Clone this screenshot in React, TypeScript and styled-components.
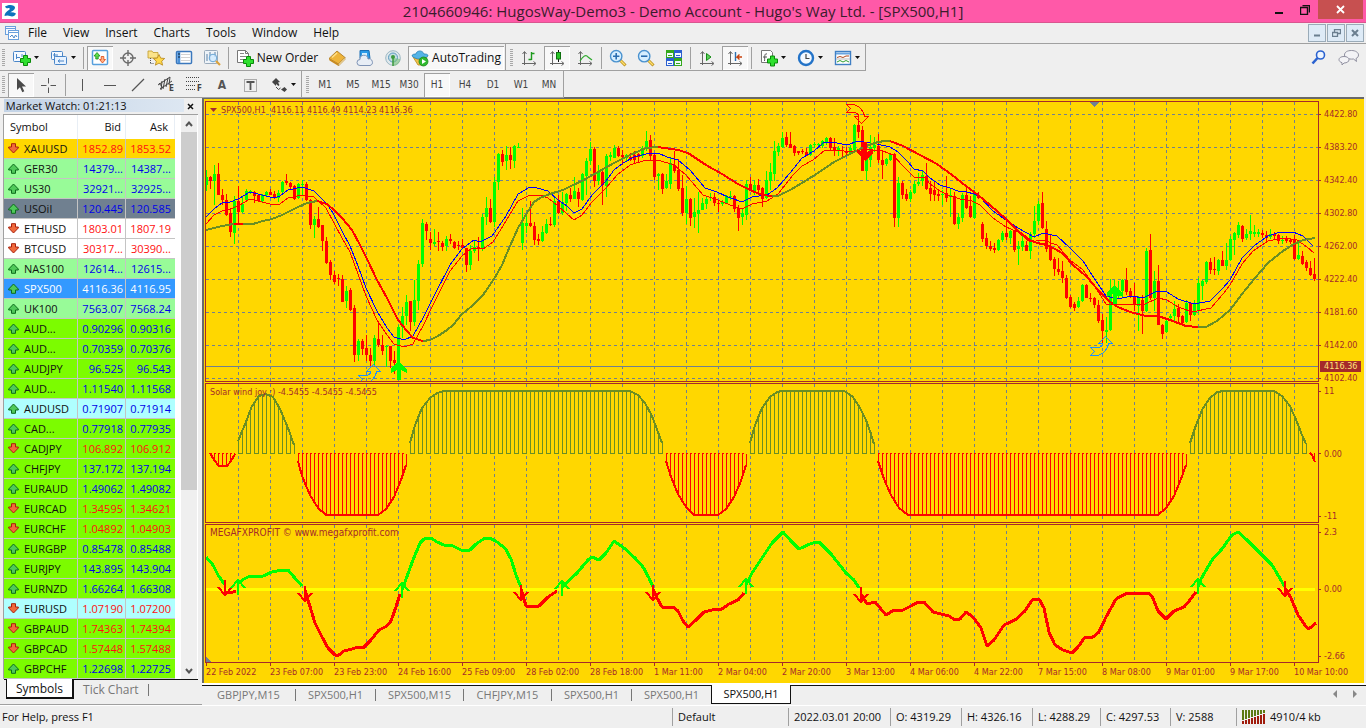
import React from 'react';
import styled, { createGlobalStyle, css } from 'styled-components';

/* ---------- theme values ---------- */

const face = '#efefef';
const line = '#a0a0a0';
const gold = '#ffd700';
const brown = '#a52a2a';
const slate = '#708090';
const olive = '#6b8e23';
const lime = '#00ff00';
const uiFont = '"Open Sans", "Noto Sans", sans-serif';
const chartFont = '"DejaVu Sans Condensed", "DejaVu Sans", sans-serif';

const Global = createGlobalStyle`
  * { box-sizing: border-box; }
  body { margin: 0; background: ${face}; font: 11px/16px ${uiFont}; color: #111; }
  button { font: inherit; color: inherit; border: 0; background: none; padding: 0; margin: 0; }
  svg { display: block; }
`;

/* ---------- price data ---------- */

/* One entry per bar: direction, high, body top, body bottom, low (thirds of a pixel from the frame). */
const BARS = `
g215,237,262,278 r233,237,250,273 g200,228,250,320 r195,228,290,292 r272,290,305,320 r287,305,350,353
r330,345,402,417 g293,308,405,437 r265,310,342,378 g295,318,342,345 g272,280,305,308 g277,279,285,288
r278,282,295,315 r287,292,308,313 g288,290,310,312 g280,281,292,295 r273,283,290,292 r280,289,300,302
g277,285,300,312 g250,252,282,285 r228,249,256,260 r252,254,266,275 r260,263,303,305 g255,258,300,303
g246,258,262,292 r252,257,305,308 r303,306,381,392 g353,363,381,420 r327,362,387,390 r380,382,430,458
r417,430,494,497 r487,492,530,547 r518,530,552,557 r527,539,543,563 r532,543,611,613 g565,578,608,630
r570,575,635,638 r622,630,770,792 g722,730,772,790 r722,730,752,772 r712,750,772,790 r750,770,790,805
g712,720,788,800 r675,723,742,747 r712,742,758,770 g740,745,748,808 r743,745,790,810 r758,787,795,828
g682,688,800,845 g628,653,688,720 g592,611,655,680 r608,610,672,698 g547,605,672,685 g487,498,608,635
g363,375,498,508 r372,377,400,425 r403,422,436,455 g393,431,437,443 r402,430,433,458 r430,435,448,460
g415,422,445,460 r408,422,430,437 r428,432,450,453 r428,440,443,455 r422,440,450,452 r450,451,500,522
g440,460,500,515 g430,447,460,466 r417,447,453,490 g347,357,452,460 g297,330,358,380 r303,330,371,375
g238,252,371,388 g165,168,253,275 r155,168,191,203 g143,172,190,215 r147,170,185,212 g141,144,188,210
g135,147,149,150 g330,375,435,455 g343,375,383,405 r310,375,385,388 r372,384,425,440 r408,424,430,440
g385,403,430,432 g363,378,405,407 r357,377,380,385 g300,310,381,388 r292,308,345,348 g283,312,345,350
g285,287,315,340 r270,290,303,312 g237,280,303,303 r270,283,303,328 g225,228,305,310 g180,190,235,290
g133,153,188,200 r147,153,248,268 g200,222,250,262 r210,222,262,320 g168,175,265,297 g163,172,177,190
g142,150,180,180 r145,150,173,178 r155,170,178,200 g168,172,180,190 r165,178,185,190 r160,172,185,195
r165,168,178,195 g145,150,175,180 g98,130,150,160 r110,127,173,185 r165,171,237,245 g225,228,235,275
r225,228,272,287 g227,250,270,273 g180,195,258,273 r158,200,218,225 r183,215,272,280 r232,270,345,355
g265,302,345,378 r300,302,360,383 g300,342,357,390 g283,336,348,405 g300,315,335,335 g297,302,318,333
g285,296,300,310 r285,297,316,323 r305,315,318,342 g305,312,318,325 g290,295,315,318 g280,293,297,305
r290,293,333,342 r320,330,360,398 g330,345,357,380 g245,258,352,365 r238,258,278,280 g245,262,278,290
r243,262,275,285 r268,270,303,327 g220,247,300,303 g195,222,250,275 g130,160,228,248 g135,143,162,175
g103,120,147,150 r102,117,140,147 r102,138,150,150 r142,144,165,175 r158,160,165,170 r153,159,162,168
r150,163,173,175 g138,140,172,173 g132,138,142,150 g135,138,142,147 g125,130,145,150 g118,120,135,140
r118,120,150,155 r120,148,158,173 g145,150,157,175 r145,157,160,177 r147,158,165,175 g140,150,165,168
g78,80,155,165 r55,80,102,120 r83,95,218,220 g150,178,218,245 g112,148,185,207 g118,142,150,163
r108,143,185,195 r160,186,200,243 g180,183,198,205 g165,168,185,190 r165,168,360,387 g237,255,360,387
r248,255,290,302 r272,287,302,308 g275,283,303,312 g250,257,285,287 g225,252,258,263 g220,230,248,263
r195,233,272,275 r248,270,288,308 r248,277,292,310 r280,289,293,308 g275,287,290,322 r233,286,300,312
g273,290,298,357 r282,295,378,382 g345,358,378,393 g285,290,360,372 r262,290,330,333 r295,323,357,360
g275,287,360,362 r283,290,300,302 r372,378,423,433 r405,420,443,452 r430,443,453,460 r435,450,455,465
g422,426,455,458 g400,405,427,432 r367,405,417,425 g395,398,420,437 r395,398,455,463 g430,445,453,500
g412,430,448,460 r430,440,458,460 g403,408,460,482 g325,368,408,420 g308,318,370,380 r282,315,390,392
r370,393,452,463 r410,445,487,490 r477,483,512,535 r480,512,523,532 r490,519,540,555 r530,540,600,603
r590,598,627,630 r612,618,630,640 g598,608,628,630 g558,562,610,613 r558,560,600,600 r585,600,604,613
r598,600,620,630 r605,620,670,675 r648,665,700,740 g658,696,702,735 g543,590,695,700 g545,585,600,610
g550,575,595,600 g543,547,580,600 r510,545,582,590 r570,578,593,600 r555,593,622,640 g595,600,625,700
r590,605,640,708 g450,460,640,643 r408,457,600,605 g520,550,600,640 r500,550,680,682 r678,680,707,722
g660,668,703,705 g648,653,660,670 g610,632,655,668 r618,630,657,675 r650,655,675,680 g605,615,673,675
r613,616,652,668 g605,618,650,655 g540,555,640,645 g545,550,563,605 g488,492,552,557 r480,493,517,527
r477,513,517,532 g483,486,520,530 r460,486,503,505 g435,485,503,515 g415,423,487,490 g402,405,425,470
g372,382,410,420 r380,383,423,433 g393,408,420,425 g352,400,408,425 g382,402,408,417 g393,403,407,418
r397,405,412,420 r400,410,420,428 g393,408,418,422 r402,408,413,425 r407,412,430,437 g415,425,430,437
r413,422,428,435 r420,425,432,437 r410,425,482,485 g430,470,483,487 r458,475,498,500 r485,492,510,520
r488,510,530,535 r480,528,543,548`
  .trim()
  .split(/\s+/)
  .map((t) => ({ up: t[0] === 'g', v: t.slice(1).split(',').map((n) => Math.round(Number(n) / 3) - 4) }));

const SLOW: [string, string][] = [
  [olive, '0,128 12,125 21,123 28,122'],
  ['red', '28,122 37,122'],
  [olive, '37,122 47,122 57,119 66,117 76,113 84,109 92,105 101,101 111,99'],
  ['red', '111,99 121,102 128,108 136,116 146,128 154,143 162,159 171,178 181,196 192,218 201,229 207,236 217,239'],
  [olive, '217,239 224,238 232,234 241,228 247,223 256,212 266,204 277,193 288,177 296,163 304,144 312,126 321,111 328,100 334,96 341,93 347,91 357,88 367,83 376,79 392,70 408,61 424,53 440,46 452,45'],
  ['red', '452,45 472,48 482,51 500,63 516,72 532,82 544,88 556,93 566,94'],
  [olive, '566,94 572,94 584,88 596,81 612,71 628,60 644,52 660,44 672,40 679,39 684,39'],
  ['red', '684,39 697,44 714,53 731,62 746,73 760,84 772,93 784,103 800,117 812,129 824,138 831,141 841,143 849,147 856,151 867,163 881,175 892,188 904,200 912,205 924,210 940,214 952,214 964,218 980,224 992,225'],
  [olive, '992,225 1000,225 1011,219 1024,208 1036,192 1049,176 1062,161 1077,149 1088,142 1097,138 1109,136'],
];

const FAST_BLUE =
  '0,115 8,107 16,101 24,100 32,97 44,90 56,93 68,96 74,94 82,88 96,85 108,89 120,101 127,111 136,129 144,144 152,164 160,186 171,209 181,226 188,235 198,238 207,234 217,216 227,196 244,163 256,147 268,138 274,140 286,134 300,114 312,92 324,85 331,86 342,89 352,98 361,104 368,111 376,107 386,93 400,79 408,68 417,61 428,55 440,52 452,51 461,55 472,58 484,68 499,86 511,90 522,95 536,100 546,95 561,93 571,86 584,71 596,56 608,49 617,41 626,40 641,43 652,39 664,41 671,42 684,45 692,50 701,59 708,67 717,69 724,76 734,83 744,86 752,89 761,90 768,92 774,95 787,109 800,118 812,126 828,135 837,131 851,134 864,146 877,159 888,176 900,194 911,197 926,194 937,196 951,189 961,190 972,197 988,202 1004,199 1017,186 1024,178 1036,156 1049,143 1062,134 1074,130 1087,130 1097,134 1107,144';

const FAST_RED =
  '0,122 8,113 16,109 24,107 32,104 44,97 56,100 68,103 74,102 82,96 96,93 108,95 120,106 128,121 136,136 144,150 152,172 160,194 171,218 181,233 188,242 198,245 207,242 217,224 227,203 244,169 256,154 266,146 277,147 287,140 300,119 312,99 324,93 334,93 342,96 352,104 361,112 368,118 376,113 386,100 400,86 411,73 424,63 440,58 452,58 468,63 480,73 497,93 512,98 524,103 536,107 546,102 561,99 572,92 587,73 596,64 607,58 619,48 631,48 644,50 657,47 677,49 687,53 697,64 708,75 719,76 724,82 734,89 744,94 754,97 766,99 774,103 787,116 800,125 812,130 824,140 837,138 851,143 864,158 877,168 888,183 900,202 911,203 926,202 937,203 952,196 961,198 972,205 986,210 1005,206 1017,192 1024,183 1036,162 1047,149 1062,139 1077,136 1091,138 1101,145 1108,151';

type Pt = [number, number];
const WIND: { color: string; pts: Pt[] }[] = [
  { color: 'red', pts: [[4, 69], [8, 76], [13, 82], [21, 82], [25, 77], [29, 70]] },
  { color: olive, pts: [[32, 57], [40, 38], [46, 22], [53, 12], [60, 10], [67, 13], [74, 25], [82, 44], [88, 61]] },
  { color: 'red', pts: [[92, 77], [96, 92], [104, 111], [112, 124], [120, 131], [172, 131], [180, 125], [188, 113], [195, 96], [200, 81]] },
  { color: olive, pts: [[204, 59], [209, 41], [216, 24], [224, 14], [231, 9], [238, 7], [424, 7], [432, 11], [439, 19], [446, 32], [452, 48], [456, 59]] },
  { color: 'red', pts: [[460, 77], [465, 93], [472, 110], [480, 123], [488, 131], [512, 131], [520, 125], [528, 113], [535, 97], [540, 81]] },
  { color: olive, pts: [[544, 59], [549, 41], [556, 24], [564, 13], [571, 8], [576, 7], [638, 7], [646, 12], [653, 22], [660, 36], [665, 50], [668, 60]] },
  { color: 'red', pts: [[672, 77], [678, 95], [685, 111], [693, 124], [702, 131], [952, 131], [960, 124], [968, 112], [975, 95], [980, 81]] },
  { color: olive, pts: [[984, 59], [990, 41], [997, 24], [1004, 14], [1011, 8], [1018, 7], [1068, 7], [1076, 12], [1084, 22], [1091, 38], [1096, 51], [1100, 60]] },
  { color: 'red', pts: [[1104, 69], [1106, 71], [1109, 78]] },
];

const OSC: [string, string][] = [
  [lime, '0,32 7,40 12,50 19,60'],
  ['red', '20,67 24,68 30,66'],
  [lime, '33,58 38,54 44,51 50,51 55,52 66,47 76,45 82,45 88,52 96,61'],
  ['red', '99,65 102,75 109,98 116,112 122,123 129,130 133,130 138,126 146,124 152,122 157,123 164,116 173,105 181,101 185,96 190,82 194,69'],
  [lime, '196,65 199,57 207,35 214,18 218,14 225,13 231,17 238,20 247,21 255,25 264,25 270,19 279,13 284,13 291,17 299,23 305,34 310,50 315,62'],
  ['red', '315,64 320,81 333,81 342,72 351,66'],
  [lime, '356,62 371,48 382,35 386,32 393,35 400,28 408,16 418,23 429,33 437,42 443,53 447,62'],
  ['red', '447,64 451,73 456,82 467,82 472,86 477,96 482,102 490,95 498,87 506,85 516,84 523,79 532,75 538,68'],
  [lime, '540,60 546,48 556,33 566,18 577,7 585,16 593,24 604,19 610,17 613,17 625,29 640,48 648,55 653,63'],
  ['red', '655,69 661,79 669,77 680,90 688,85 695,86 705,81 712,77 718,77 727,87 743,91 749,95 754,94 760,87 767,92 775,103 781,121 788,115 798,100 809,95 819,86 826,75 833,74 838,83 843,107 849,120 857,125 866,128 872,122 879,112 887,112 893,107 900,92 910,74 921,68 942,68 946,71 952,86 960,94 968,86 978,82 984,75 990,67'],
  [lime, '992,62 995,54 1006,35 1016,24 1026,10 1032,7 1041,15 1056,30 1066,40 1079,62'],
  ['red', '1079,63 1085,73 1092,90 1101,103 1104,103 1110,98'],
];

const OSC_ARROWS: [number, number, boolean][] = [
  [19, 71, false], [32, 54, true], [99, 77, false], [196, 57, true], [315, 76, false], [356, 55, true],
  [447, 76, false], [540, 53, true], [655, 78, false], [992, 53, true], [1079, 72, false],
];

/* ---------- chart drawing ---------- */

const PLOT_W = 1112;

const Drawing = styled.svg`
  display: block;
  width: 100%;
  height: 100%;
`;

const Plot = ({ h, children }: { h: number; children: React.ReactNode }) => (
  <Drawing viewBox={`0 0 ${PLOT_W} ${h}`} preserveAspectRatio="none" shapeRendering="crispEdges" aria-hidden="true">
    {Array.from({ length: 34 }, (_, i) => (
      <line key={i} x1={32 * i + 32.5} x2={32 * i + 32.5} y1="0" y2={h} stroke={slate} strokeDasharray="3 3" />
    ))}
    {children}
  </Drawing>
);

const CURVED = 'M0 0l7 7h-4c-1 7-7 12-12 12h-6l4-4-4-4h6c3 0 6-1 6-4h-4z';
const SOLID = 'M0 0l8 8v4l-6-3v10h-4v-10l-6 3v-4z';

const PricePlot = () => (
  <Plot h={279}>
    {Array.from({ length: 9 }, (_, i) => (
      <line key={i} x1="0" x2={PLOT_W} y1={12.5 + 33 * i} y2={12.5 + 33 * i} stroke={slate} strokeDasharray="3 3" />
    ))}
    <line x1="0" x2={PLOT_W} y1="264.5" y2="264.5" stroke={slate} />
    <path d="M884 0h9l-4.5 5z" fill={slate} />
    {BARS.map(({ up, v }, k) => (
      <g key={k} fill={up ? lime : 'red'}>
        <rect x={4 * k} y={v[0]} width="1" height={Math.max(1, v[3] - v[0])} />
        <rect x={4 * k - 1} y={v[1]} width="3" height={Math.max(1, v[2] - v[1])} />
      </g>
    ))}
    <polyline points={FAST_RED} fill="none" stroke="red" />
    <polyline points={FAST_BLUE} fill="none" stroke="blue" />
    {SLOW.map(([c, p], i) => (
      <polyline key={i} points={p} fill="none" stroke={c} strokeWidth="2" />
    ))}
    <path d={SOLID} fill={lime} transform="translate(192.5 259)" />
    <path d={SOLID} fill={lime} transform="translate(908.5 183)" />
    <path d={SOLID} fill="red" transform="translate(659 59) scale(1 -1)" />
    <path d={CURVED} fill="none" stroke="#1e90ff" transform="translate(167.5 262.5)" />
    <path d={CURVED} fill="none" stroke="#1e90ff" transform="translate(899.5 234.5)" />
    <path d={CURVED} fill="none" stroke="red" transform="translate(655.5 21.5) scale(1 -1)" />
  </Plot>
);

const levelAt = (pts: Pt[], x: number) => {
  for (let i = 1; i < pts.length; i++) {
    const [x0, y0] = pts[i - 1];
    const [x1, y1] = pts[i];
    if (x <= x1) return y0 + ((y1 - y0) * (x - x0)) / (x1 - x0);
  }
  return pts[pts.length - 1][1];
};

const WindPlot = () => (
  <Plot h={138}>
    {WIND.map(({ color, pts }, i) => {
      const first = pts[0][0];
      const last = pts[pts.length - 1][0];
      const xs: number[] = [];
      for (let x = Math.ceil(first / 4) * 4; x <= last; x += 4) xs.push(x);
      return (
        <g key={i} stroke={color} fill="none">
          <path d={xs.map((x) => `M${x + 0.5} 69.5V${Math.round(levelAt(pts, x))}`).join('')} />
          <line x1={first} x2={last} y1="69.5" y2="69.5" strokeDasharray={color === 'red' ? '2 2' : '4 4'} />
          <polyline points={pts.map((p) => p.join()).join(' ')} strokeWidth="2" />
        </g>
      );
    })}
  </Plot>
);

const OscPlot = () => (
  <Plot h={137}>
    <rect x="0" y="63" width="1109" height="3" fill="#ffff00" />
    {OSC.map(([c, p], i) => (
      <polyline key={i} points={p} fill="none" stroke={c} strokeWidth="3" strokeLinejoin="round" />
    ))}
    {OSC_ARROWS.map(([x, y, up], i) => (
      <path
        key={i}
        d={up ? 'M0 1v15M-7 9L0 1L7 9' : 'M0-1v-15M-7-9L0-1L7-9'}
        transform={`translate(${x} ${y})`}
        fill="none"
        stroke={up ? lime : 'red'}
        strokeWidth="2"
      />
    ))}
    <path d="M0 132v5h5z" fill={slate} />
  </Plot>
);

/* ---------- window frame ---------- */

const Window = styled.div`
  display: flex;
  flex-direction: column;
  min-height: 100vh;
  min-width: 1024px;
  background: ${face};
  overflow: hidden;
`;

const TitleBar = styled.header`
  display: grid;
  grid-template-columns: 1fr auto 1fr;
  height: 23px;
  background: #ff59a8;
  border-bottom: 1px solid #d9568f;
`;

const Title = styled.h1`
  margin: 0;
  font-size: 15px;
  line-height: 22px;
  font-weight: 400;
  color: #3b1c2c;
`;

const Logo = styled.svg`
  margin: 3px 2px;
  background: #fff;
`;

const Caption = styled.div`
  display: flex;
  justify-content: flex-end;
  padding-right: 3px;
`;

const CaptionButton = styled.button<{ $close?: boolean }>`
  display: flex;
  align-items: center;
  justify-content: center;
  width: ${(p) => (p.$close ? 45 : 26)}px;
  height: 19px;
  background: ${(p) => (p.$close ? '#c75050' : 'transparent')};
`;

const MenuBar = styled.nav`
  display: flex;
  align-items: center;
  height: 21px;
  padding: 0 2px 0 5px;
  border-bottom: 1px solid ${line};
`;

const MenuItem = styled.button`
  padding: 0 8px;
  font-size: 12px;
  line-height: 18px;
`;

const Mdi = styled.div`
  display: flex;
  gap: 1px;
  margin-left: auto;
`;

const MdiButton = styled.button`
  display: flex;
  align-items: center;
  justify-content: center;
  width: 18px;
  height: 18px;
  border: 1px solid #9aabb8;
  background: #deebf7;
`;

const ToolRow = styled.div`
  display: flex;
  align-items: stretch;
  height: 27px;
`;

const ToolGroup = styled.div`
  display: flex;
  align-items: center;
  padding: 1px 0 0 7px;
  border-right: 1px solid ${line};
  border-bottom: 1px solid ${line};
  position: relative;
  & + & { padding-left: 9px; }
  &::before {
    content: '';
    position: absolute;
    left: 2px;
    top: 5px;
    bottom: 4px;
    width: 3px;
    background: repeating-linear-gradient(#a8a8a8 0 1px, transparent 1px 2px);
  }
  & + &::before { left: 4px; }
`;

const pressed = css`
  background: #f8f8f8;
  box-shadow: inset 1px 1px ${line}, inset -1px -1px #fff;
`;

const ToolButton = styled.button<{ $on?: boolean; $w?: number }>`
  display: flex;
  align-items: center;
  justify-content: center;
  gap: 3px;
  width: ${(p) => p.$w ?? 26}px;
  height: 24px;
  margin: 0 1px;
  font-size: 12px;
  white-space: nowrap;
  ${(p) => p.$on && pressed}
`;

const PeriodButton = styled(ToolButton)`
  font: 10px/24px ${chartFont};
  color: #444;
`;

const Divider = styled.span`
  width: 1px;
  height: 22px;
  margin: 0 2px;
  background: ${line};
`;

const Corner = styled.div`
  display: flex;
  align-items: center;
  gap: 10px;
  margin-left: auto;
  padding-right: 6px;
`;

/* ---------- icons ---------- */

const I = ({ children, w = 18 }: { children: React.ReactNode; w?: number }) => (
  <svg width={w} height="18" viewBox={`0 0 ${w} 18`} fill="none" aria-hidden="true">
    {children}
  </svg>
);

const Plus = ({ x, y }: { x: number; y: number }) => (
  <path transform={`translate(${x} ${y})`} d="M3 0h4v3h3v4H7v3H3V7H0V3h3z" fill="#2fe02f" stroke="#0a8a0a" />
);

const Caret = () => (
  <svg width="5" height="3" viewBox="0 0 5 3" aria-hidden="true">
    <path d="M0 0h5L2.500 3z" fill="#111" />
  </svg>
);

const NewChartIcon = () => (
  <I>
    <rect x=".5" y="2.500" width="12" height="10" rx="1" fill="#f4f9ff" stroke="#4a86c8" />
    <path d="M3.500 5v5M3 8.500h4M9 5v3" stroke="#4a86c8" />
    <Plus x={7.5} y={6.5} />
  </I>
);
const ProfilesIcon = () => (
  <I>
    <rect x="1.500" y="2.500" width="11" height="8" rx="1" fill="#f4f9ff" stroke="#4a86c8" />
    <path d="M3 6h5M4.500 4v5" stroke="#4a86c8" />
    <rect x="4.500" y="7.500" width="12" height="8" rx="1" fill="#e7f2ff" stroke="#4a86c8" />
    <path d="M14 12h-6l2-1.500M8 12l2 1.500" stroke="#4a86c8" />
  </I>
);
const WatchIcon = () => (
  <I>
    <rect x="1.500" y="1.500" width="15" height="14" rx="1" fill="#fff" stroke="#58a0dd" strokeWidth="1.500" />
    <path d="M3 7l3-3.500L9 7H7.200v3H4.800V7z" fill="#5fe04a" stroke="#178a17" strokeWidth=".8" />
    <path d="M8.500 10.500h1.700v-3h2.600v3h1.700l-3 3.500z" fill="#ffb48a" stroke="#e0430c" strokeWidth=".8" />
  </I>
);
const DataIcon = () => (
  <I>
    <circle cx="9" cy="9" r="5" stroke="#6b6b6b" strokeWidth="1.400" />
    <path d="M9 1v6M9 11v6M1 9h6M11 9h6" stroke="#6b6b6b" strokeWidth="1.400" />
  </I>
);
const NavigatorIcon = () => (
  <I>
    <path d="M1 2h4l1 1.500h5V9H1z" fill="#fbe38a" stroke="#c09a2a" strokeWidth=".8" />
    <path d="M3.500 9v6M3.500 14.500h4" stroke="#555" strokeDasharray="1 1" />
    <path d="M12 5.500l1.700 3.600 4 .4-3 2.700.9 4-3.600-2.100-3.600 2.100.9-4-3-2.700 4-.4z" fill="#ffd84a" stroke="#b5851a" strokeWidth=".8" />
  </I>
);
const TerminalIcon = () => (
  <I>
    <rect x="1.500" y="2.500" width="15" height="12" rx="1" fill="#fff" stroke="#3b78bd" strokeWidth="1.500" />
    <path d="M3.800 3v11" stroke="#4a90d9" strokeWidth="3" />
    <path d="M6 5.500h9M6 8.500h9M6 11.500h9" stroke="#d2d2d2" />
    <path d="M3 5h2M3 8h2" stroke="#123" />
  </I>
);
const TesterIcon = () => (
  <I>
    <rect x="1.500" y="1.500" width="13" height="13" rx="1" fill="#eef3f8" stroke="#9ab" />
    <path d="M4 5v7M7 3v8M12 3v5" stroke="#5a82a8" />
    <circle cx="10" cy="9" r="3.800" fill="#cfeaffcc" stroke="#6aa6d6" />
    <path d="M13 12l4 4" stroke="#dca23a" strokeWidth="2.200" />
  </I>
);
const OrderIcon = () => (
  <I>
    <path d="M1.500 1.500h8l3 3v9h-11z" fill="#fff" stroke="#777" />
    <path d="M4 4.500h4M4 7.500h6M4 10.500h5" stroke="#888" />
    <path d="M9.500 1.500v3h3" stroke="#777" />
    <Plus x={7.5} y={7.5} />
  </I>
);
const BookIcon = () => (
  <I>
    <path d="M1 9.500L9 2l8 6.500-6.500 6.500z" fill="#eeb43a" stroke="#a8741a" strokeWidth=".8" />
    <path d="M1 9.500l9.500 5.500v2L1.500 11.500z" fill="#c98a1d" />
    <path d="M10.500 15l6.500-6.500v2l-6.500 6.500z" fill="#f7e3a8" stroke="#a8741a" strokeWidth=".5" />
    <path d="M4 8.500L9 4" stroke="#ffe08a" strokeWidth="1.500" />
  </I>
);
const CloudPcIcon = () => (
  <I>
    <path d="M4 1.500h9l1 8H4z" fill="#2c9be8" stroke="#1b6fb4" />
    <path d="M6 4h5v3H6z" fill="#d6f0ff" />
    <path d="M4 16.500a3 3 0 0 1 0-6 4 4 0 0 1 8-.5 3.200 3.200 0 0 1 2 6.500z" fill="#e8eef6" stroke="#7e93b5" />
  </I>
);
const SignalIcon = () => (
  <I>
    <circle cx="9" cy="9" r="7.300" fill="#dfe8ec" stroke="#9db8c4" />
    <circle cx="9" cy="8.500" r="4.500" fill="#c6dde2" stroke="#5a9bc0" />
    <circle cx="9" cy="8" r="2" fill="#3c9a3c" />
    <path d="M9 9v8c4 0 7-3 7.300-7" fill="#6cc06c88" />
    <path d="M9 9v8" stroke="#3c9a3c" strokeWidth="1.500" />
  </I>
);
const AutoIcon = () => (
  <I>
    <path d="M2 8c4 3 10 3 14 0l-4 8H7z" fill="#f0c24a" stroke="#b98a1d" strokeWidth=".8" />
    <path d="M1 7c0-2 3-2 4-2 0-3 6-5 8 0 2 0 4 0 4 2-4 4-12 4-16 0z" fill="#53b4e6" stroke="#2c82b8" strokeWidth=".8" />
    <circle cx="12.500" cy="12.500" r="4.500" fill="#2fb92f" stroke="#128012" strokeWidth=".7" />
    <path d="M11 10l4 2.500-4 2.500z" fill="#fff" />
  </I>
);
const Axes = () => <path d="M4.500 3v13M2.500 5l2-2.500 2 2.500M2 14.500h13.500M13.500 12.500l2.500 2-2.500 2" stroke="#666" />;
const BarIcon = () => (
  <I>
    <Axes />
    <path d="M11.500 3v8M11.500 4.500h3M8.500 10.500h3" stroke="#1c9a1c" strokeWidth="1.400" />
  </I>
);
const CandleIcon = () => (
  <I>
    <Axes />
    <path d="M10.500 1v12" stroke="#111" />
    <rect x="8.500" y="3.500" width="4" height="6.500" fill="#27c427" stroke="#0e700e" />
  </I>
);
const LineIcon = () => (
  <I>
    <Axes />
    <path d="M4 12c3-5 6-7 8-4l4 3" stroke="#2faa2f" strokeWidth="1.200" />
  </I>
);
const ZoomIcon = ({ plus }: { plus?: boolean }) => (
  <I>
    <path d="M11 11l5.500 5.500" stroke="#b98e1a" strokeWidth="3" />
    <path d="M11 11l5 5" stroke="#ffdf6a" strokeWidth="1.400" />
    <circle cx="7.200" cy="7.200" r="5.700" fill="#d7efff" stroke="#4a92cf" strokeWidth="1.400" />
    <path d={plus ? 'M4 7.200h6.400M7.200 4v6.400' : 'M4 7.200h6.400'} stroke="#2a6db0" strokeWidth="1.600" />
  </I>
);
const TileIcon = () => (
  <I>
    {[['#35a81c', 1, 1], ['#2b5fd0', 9, 1], ['#2b5fd0', 1, 9], ['#35a81c', 9, 9]].map(([c, x, y], i) => (
      <g key={i} transform={`translate(${x} ${y})`}>
        <rect width="8" height="8" fill={c as string} />
        <path d="M1 3h6v4H1z" fill="#f2f8ff" />
        <path d="M2 5.500h4" stroke={c as string} />
      </g>
    ))}
  </I>
);
const ScrollIcon = () => (
  <I>
    <Axes />
    <path d="M8.500 4.500l4.500 3.500-4.500 3.500z" fill="#5ad05a" stroke="#148a14" />
  </I>
);
const ShiftIcon = () => (
  <I>
    <Axes />
    <path d="M9.500 3v9" stroke="#2b6fb0" strokeWidth="1.400" />
    <path d="M16 8h-5l2.500-2.500M11 8l2.500 2.500" stroke="#c8410c" strokeWidth="1.400" />
  </I>
);
const IndicatorIcon = () => (
  <I>
    <path d="M1.500 1.500h9l2 2v10h-11z" fill="#fff" stroke="#777" />
    <path d="M7 5c-3-1-2 3-2.500 7M3 8h4" stroke="#555" />
    <Plus x={7.5} y={7} />
  </I>
);
const ClockIcon = () => (
  <I>
    <circle cx="9" cy="9" r="7" fill="#f4f9ff" stroke="#2373c8" strokeWidth="2.400" />
    <path d="M9 5v4.500h3.500" stroke="#444" strokeWidth="1.200" />
  </I>
);
const TemplateIcon = () => (
  <I>
    <rect x="1.500" y="2.500" width="15" height="13" fill="#fff" stroke="#3f7fc4" strokeWidth="1.400" />
    <path d="M2 4.500h14" stroke="#68a4e0" strokeWidth="2" />
    <path d="M3 8.500l3-1 3 1 3-1.500h3" stroke="#b04a20" />
    <path d="M2 10h14" stroke="#bbb" />
    <path d="M3 13l3-1.500 3 1.500 3-1.500 3 1.500" stroke="#2f9f2f" />
  </I>
);
const SearchIcon = () => (
  <I>
    <circle cx="10.500" cy="6" r="4" fill="#eef5ff" stroke="#2a62d0" strokeWidth="1.600" />
    <path d="M7.500 9l-5 5.500" stroke="#2a62d0" strokeWidth="2.600" />
  </I>
);
const ChatIcon = () => (
  <I w={22}>
    <path d="M13.500 1.500c4 0 7 2 7 4.500 0 1.500-1 3-2.500 3.500l.5 3-3-2.500c-5 .5-9-1-9-4s3-4.500 7-4.500z" fill="#f3f3f6" stroke="#9090a0" />
    <path d="M6 7.500c3 0 5 1.300 5 3.200s-2 3.300-5 3.300l-2 2v-2.300C2 13 1 12 1 10.700 1 8.800 3 7.500 6 7.500z" fill="#f3f3f6" stroke="#9090a0" />
  </I>
);
const CursorIcon = () => (
  <I>
    <path d="M5 2v12l3-2.800 2.300 5 2-1-2.300-4.700h4z" fill="#4a4a4a" />
  </I>
);
const CrossIcon = () => (
  <I>
    <path d="M8.500 2v5.500M8.500 11.500V17M1 9.500h5.500M10.500 9.500H16" stroke="#555" />
  </I>
);
const VLineIcon = () => (
  <I>
    <path d="M9.500 3v12" stroke="#555" />
  </I>
);
const HLineIcon = () => (
  <I>
    <path d="M3 9.500h12" stroke="#555" />
  </I>
);
const TrendIcon = () => (
  <I>
    <path d="M3 15L15 3" stroke="#555" strokeWidth="1.200" />
  </I>
);
const Letter = styled.text`
  font: 700 8px ${chartFont};
  fill: #444;
`;
const ChannelIcon = () => (
  <I>
    <path d="M1 9l12-8M3 13l12-8M5 5l-1 9M8 3L6 13M11 2L9 11M13 1l-1 8M2 7l4 5" stroke="#444" />
    <Letter x="12" y="15">E</Letter>
  </I>
);
const FiboIcon = () => (
  <I>
    <path d="M1 1.500h14M1 5.500h14M1 9.500h10M1 13.500h9" stroke="#444" strokeDasharray="1 1" />
    <Letter x="12" y="15">F</Letter>
  </I>
);
const Glyph = styled.span`
  font: 700 12px/24px ${chartFont};
  color: #555;
`;
const LabelIcon = () => (
  <I>
    <rect x="3.500" y="3.500" width="12" height="12" stroke="#666" strokeDasharray="1 1" />
    <path d="M5.500 6h8M9.500 6v8" stroke="#555" strokeWidth="1.800" />
  </I>
);
const ShapesIcon = () => (
  <I>
    <path d="M6 2l4 4-2 .5L9.500 9l-1 1L6 8v2L2 6z" fill="#444" />
    <path d="M6 11l2.500 2.500 2-1.500" stroke="#444" />
    <path d="M11 13.500l3.500-2.500 2.500 2.500-2.500 2.500z" fill="#444" />
  </I>
);

/* ---------- toolbars ---------- */

const MENU = ['File', 'View', 'Insert', 'Charts', 'Tools', 'Window', 'Help'];
const PERIODS = ['M1', 'M5', 'M15', 'M30', 'H1', 'H4', 'D1', 'W1', 'MN'];

const Toolbars = () => (
  <>
    <ToolRow>
      <ToolGroup>
        <ToolButton $w={35} aria-label="New chart"><NewChartIcon /><Caret /></ToolButton>
        <ToolButton $w={35} aria-label="Profiles"><ProfilesIcon /><Caret /></ToolButton>
        <Divider />
        <ToolButton $on aria-label="Market Watch"><WatchIcon /></ToolButton>
        <ToolButton aria-label="Data Window"><DataIcon /></ToolButton>
        <ToolButton aria-label="Navigator"><NavigatorIcon /></ToolButton>
        <ToolButton aria-label="Terminal"><TerminalIcon /></ToolButton>
        <ToolButton aria-label="Strategy Tester"><TesterIcon /></ToolButton>
        <Divider />
        <ToolButton $w={90}><OrderIcon />New Order</ToolButton>
        <ToolButton aria-label="MetaEditor"><BookIcon /></ToolButton>
        <ToolButton aria-label="Virtual hosting"><CloudPcIcon /></ToolButton>
        <ToolButton aria-label="Signals"><SignalIcon /></ToolButton>
        <ToolButton $on $w={96}><AutoIcon />AutoTrading</ToolButton>
      </ToolGroup>
      <ToolGroup>
        <ToolButton aria-label="Bar chart"><BarIcon /></ToolButton>
        <ToolButton $on aria-label="Candlesticks"><CandleIcon /></ToolButton>
        <ToolButton aria-label="Line chart"><LineIcon /></ToolButton>
        <Divider />
        <ToolButton aria-label="Zoom in"><ZoomIcon plus /></ToolButton>
        <ToolButton aria-label="Zoom out"><ZoomIcon /></ToolButton>
        <ToolButton aria-label="Tile windows"><TileIcon /></ToolButton>
        <Divider />
        <ToolButton aria-label="Auto scroll"><ScrollIcon /></ToolButton>
        <ToolButton $on aria-label="Chart shift"><ShiftIcon /></ToolButton>
        <Divider />
        <ToolButton $w={35} aria-label="Indicators"><IndicatorIcon /><Caret /></ToolButton>
        <ToolButton $w={35} aria-label="Periods"><ClockIcon /><Caret /></ToolButton>
        <ToolButton $w={35} aria-label="Templates"><TemplateIcon /><Caret /></ToolButton>
      </ToolGroup>
      <Corner>
        <button aria-label="Search"><SearchIcon /></button>
        <button aria-label="Chat"><ChatIcon /></button>
      </Corner>
    </ToolRow>
    <ToolRow>
      <ToolGroup>
        <ToolButton $on aria-label="Cursor"><CursorIcon /></ToolButton>
        <ToolButton aria-label="Crosshair"><CrossIcon /></ToolButton>
        <Divider />
        <ToolButton aria-label="Vertical line"><VLineIcon /></ToolButton>
        <ToolButton aria-label="Horizontal line"><HLineIcon /></ToolButton>
        <ToolButton aria-label="Trendline"><TrendIcon /></ToolButton>
        <ToolButton aria-label="Equidistant channel"><ChannelIcon /></ToolButton>
        <ToolButton aria-label="Fibonacci retracement"><FiboIcon /></ToolButton>
        <ToolButton><Glyph>A</Glyph></ToolButton>
        <ToolButton aria-label="Text label"><LabelIcon /></ToolButton>
        <ToolButton $w={35} aria-label="Arrows"><ShapesIcon /><Caret /></ToolButton>
      </ToolGroup>
      <ToolGroup>
        {PERIODS.map((p) => (
          <PeriodButton key={p} $on={p === 'H1'}>{p}</PeriodButton>
        ))}
      </ToolGroup>
    </ToolRow>
  </>
);

/* ---------- market watch ---------- */

const Workspace = styled.main`
  display: grid;
  grid-template-columns: 202px 1fr;
  flex: 1;
  margin-top: -1px;
`;

const Watch = styled.section`
  display: flex;
  flex-direction: column;
  padding-left: 3px;
  padding-right: 4px;
  border-top: 1px solid ${line};
  border-bottom: 1px solid ${line};
`;

const WatchTitle = styled.h2`
  display: flex;
  align-items: center;
  justify-content: space-between;
  height: 16px;
  margin: 0;
  font-size: 11px;
  font-weight: 400;
  white-space: nowrap;
  background: linear-gradient(90deg, #c3d3e6, #dde7f2) no-repeat 1px 1px / 180px 13px;
`;

const WatchBody = styled.div`
  display: flex;
  flex: 1;
  border-top: 1px solid ${line};
  border-left: 1px solid ${line};
  background: #fff;
`;

const Quotes = styled.table`
  width: 171px;
  height: 564px;
  table-layout: fixed;
  border-collapse: separate;
  border-spacing: 0;
`;

const Head = styled.th<{ $num?: boolean }>`
  height: 24px;
  padding: 0 6px;
  border-right: 1px solid #e8eef5;
  font-weight: 400;
  text-align: ${(p) => (p.$num ? 'right' : 'left')};
`;

const HeadBid = styled(Head)`
  padding-right: 4px;
`;

const Row = styled.tr<{ $bg: string; $fg: string; $sel: boolean }>`
  height: 20px;
  background: ${(p) => p.$bg};
  color: ${(p) => (p.$sel ? '#fff' : p.$fg)};
`;

const Cell = styled.td<{ $last?: boolean }>`
  padding: 0 ${(p) => (p.$last ? 4 : 2)}px 0 0;
  border-bottom: 1px solid #c4c4c4;
  border-right: ${(p) => (p.$last ? 0 : 1)}px solid #c4c4c4;
  text-align: right;
  line-height: 19px;
`;

const Sym = styled.span<{ $sel: boolean }>`
  display: flex;
  align-items: center;
  gap: 5px;
  padding-left: 4px;
  color: ${(p) => (p.$sel ? '#fff' : '#111')};
`;

const Scroll = styled.div`
  display: flex;
  flex-direction: column;
  align-items: center;
  width: 16px;
  margin-left: 6px;
  background: ${face};
`;

const ScrollButton = styled.button`
  display: flex;
  align-items: center;
  justify-content: center;
  width: 16px;
  height: 17px;
`;

const Thumb = styled.div`
  flex: 358;
  width: 16px;
  background: #cdcdcd;
`;

const Track = styled.div`
  flex: 172;
`;

const WatchTabs = styled.div`
  display: flex;
  border-top: 1px solid #111;
  margin-left: 1px;
  height: 25px;
  align-items: flex-start;
`;

const WatchTab = styled.button<{ $on?: boolean }>`
  height: 19px;
  padding: 0 9px;
  margin-left: ${(p) => (p.$on ? 2 : 0)}px;
  margin-top: ${(p) => (p.$on ? -1 : 0)}px;
  line-height: 19px;
  font-size: 12px;
  color: ${(p) => (p.$on ? '#111' : '#777')};
  ${(p) => p.$on && css`background: #fff; border: solid #111; border-width: 0 2px 2px 1px; height: 20px;`}
`;

const TabBar = styled.span`
  width: 1px;
  height: 12px;
  margin-top: 4px;
  background: #777;
`;

const PALE = '#98fb98';
const LAWN = '#7cfc00';
const AQUA = '#afffff';
const SEL = '#3399ff';
const QUOTES: [string, string, string, boolean, string][] = [
  ['XAUUSD', '1852.89', '1853.52', false, gold],
  ['GER30', '14379...', '14387...', true, PALE],
  ['US30', '32921...', '32925...', true, PALE],
  ['USOil', '120.445', '120.585', true, slate],
  ['ETHUSD', '1803.01', '1807.19', false, '#fff'],
  ['BTCUSD', '30317...', '30390...', false, '#fff'],
  ['NAS100', '12614...', '12615...', true, PALE],
  ['SPX500', '4116.36', '4116.95', true, SEL],
  ['UK100', '7563.07', '7568.24', true, PALE],
  ['AUD...', '0.90296', '0.90316', true, LAWN],
  ['AUD...', '0.70359', '0.70376', true, LAWN],
  ['AUDJPY', '96.525', '96.543', true, LAWN],
  ['AUD...', '1.11540', '1.11568', true, LAWN],
  ['AUDUSD', '0.71907', '0.71914', true, AQUA],
  ['CAD...', '0.77918', '0.77935', true, LAWN],
  ['CADJPY', '106.892', '106.912', false, LAWN],
  ['CHFJPY', '137.172', '137.194', true, LAWN],
  ['EURAUD', '1.49062', '1.49082', true, LAWN],
  ['EURCAD', '1.34595', '1.34621', false, LAWN],
  ['EURCHF', '1.04892', '1.04903', false, LAWN],
  ['EURGBP', '0.85478', '0.85488', true, LAWN],
  ['EURJPY', '143.895', '143.904', true, LAWN],
  ['EURNZD', '1.66264', '1.66308', true, LAWN],
  ['EURUSD', '1.07190', '1.07200', false, AQUA],
  ['GBPAUD', '1.74363', '1.74394', false, LAWN],
  ['GBPCAD', '1.57448', '1.57488', false, LAWN],
  ['GBPCHF', '1.22698', '1.22725', true, LAWN],
];

const Trend = ({ up }: { up: boolean }) => (
  <svg width="11" height="11" viewBox="0 0 11 11" aria-hidden="true">
    {up ? (
      <path d="M5.500 1L10.300 6v1H7.500v3.300h-4V7H.7V6z" fill="#4fc95a" stroke="#0d6b1c" />
    ) : (
      <path d="M5.500 10L.7 5V4h2.800V.7h4V4h2.800v1z" fill="#f06a3c" stroke="#a8200c" />
    )}
  </svg>
);

const MarketWatch = () => (
  <Watch>
    <WatchTitle>
      <span>&nbsp;Market Watch: 01:21:13</span>
      <ScrollButton aria-label="Close Market Watch">
        <svg width="7" height="7" viewBox="0 0 7 7"><path d="M1 1l5 5M6 1L1 6" stroke="#111" strokeWidth="1.500" /></svg>
      </ScrollButton>
    </WatchTitle>
    <WatchBody>
      <Quotes>
        <colgroup><col width="74" /><col width="48" /><col width="49" /></colgroup>
        <thead>
          <tr><Head>Symbol</Head><HeadBid $num>Bid</HeadBid><Head $num>Ask</Head></tr>
        </thead>
        <tbody>
          {QUOTES.map(([s, bid, ask, up, bg], i) => (
            <Row key={i} $bg={bg} $fg={up ? '#0000e8' : '#ff1010'} $sel={bg === SEL}>
              <Cell><Sym $sel={bg === SEL}><Trend up={up} />{s}</Sym></Cell>
              <Cell>{bid}</Cell>
              <Cell $last>{ask}</Cell>
            </Row>
          ))}
        </tbody>
      </Quotes>
      <Scroll>
        <ScrollButton aria-label="Scroll up">
          <svg width="8" height="6" viewBox="0 0 8 6"><path d="M1 5l3-3.500L7 5" fill="none" stroke="#555" strokeWidth="2" /></svg>
        </ScrollButton>
        <Thumb />
        <Track />
        <ScrollButton aria-label="Scroll down">
          <svg width="8" height="6" viewBox="0 0 8 6"><path d="M1 1l3 3.500L7 1" fill="none" stroke="#555" strokeWidth="2" /></svg>
        </ScrollButton>
      </Scroll>
    </WatchBody>
    <WatchTabs>
      <WatchTab $on>Symbols</WatchTab>
      <WatchTab>Tick Chart</WatchTab>
      <TabBar />
    </WatchTabs>
  </Watch>
);

/* ---------- chart window ---------- */

const ChartColumn = styled.section`
  display: flex;
  flex-direction: column;
  min-width: 0;
`;

const ChartArea = styled.div`
  display: flex;
  flex-direction: column;
  gap: 1px;
  flex: 1;
  margin-right: 2px;
  padding: 2px 0 0 1px;
  border: solid #696969;
  border-width: 2px 0 0 2px;
  background: ${gold};
  color: ${brown};
  font: 9px/12px ${chartFont};
`;

const Pane = styled.div<{ $h: number }>`
  display: grid;
  grid-template-columns: 1fr 45px;
  flex: ${(p) => p.$h} 0 ${(p) => p.$h}px;
`;

const PlotBox = styled.div`
  position: relative;
  border: 1px solid ${brown};
  min-width: 0;
  height: 100%;
  & > svg { position: absolute; inset: 0; }
`;

const Legend = styled.div<{ $big?: boolean }>`
  position: absolute;
  left: 4px;
  top: 2px;
  display: flex;
  align-items: center;
  gap: 4px;
  font-size: ${(p) => (p.$big ? 10 : 9)}px;
  white-space: pre;
`;

const Scale = styled.div<{ $rows: string; $top: number }>`
  position: relative;
  display: grid;
  grid-template-rows: ${(p) => p.$rows} 12px;
  align-items: start;
  padding-top: ${(p) => p.$top}px;
  height: calc(${(p) => p.$top}px + 100% - ${(p) => (p.$top === 2 ? 3 : 5)}px);
`;

const Tick = styled.span`
  display: flex;
  align-items: center;
  gap: 3px;
  &::before { content: ''; width: 2px; height: 1px; background: ${brown}; }
`;

const PriceTag = styled.span`
  position: absolute;
  left: 1px;
  top: 260px;
  width: 41px;
  padding-left: 4px;
  line-height: 11px;
  background: ${brown};
  color: #ffe27a;
`;

const TimeAxis = styled.div`
  display: flex;
  flex: 0 0 20px;
  margin: -1px 45px 0 0;
  padding-left: 1px;
`;

const TimeMark = styled.span<{ $grow: number }>`
  flex: ${(p) => p.$grow} 0 0;
  min-width: 0;
  white-space: nowrap;
  &::before { content: ''; display: block; width: 1px; height: 3px; background: ${brown}; }
`;

const ChartTabs = styled.div`
  display: flex;
  align-items: flex-start;
  height: 22px;
  border-top: 2px solid #fff;
  background: linear-gradient(#111 0 1px, transparent 1px);
  color: #777;
`;

const ChartTab = styled.button<{ $w: number; $on?: boolean }>`
  width: ${(p) => p.$w}px;
  height: 19px;
  line-height: 18px;
  white-space: nowrap;
  ${(p) => p.$on && css`color: #111; background: #fff; border: solid #111; border-width: 0 1px 1px 1px;`}
`;

const TabNav = styled.div`
  display: flex;
  gap: 14px;
  margin-left: auto;
  padding: 5px 9px 0 0;
`;

const PRICES = ['4422.80', '4383.20', '4342.40', '4302.80', '4262.00', '4222.40', '4181.60', '4142.00', '4102.40'];
const TIMES = [
  '22 Feb 2022', '23 Feb 07:00', '23 Feb 23:00', '24 Feb 16:00', '25 Feb 09:00', '28 Feb 02:00',
  '28 Feb 18:00', '1 Mar 11:00', '2 Mar 04:00', '2 Mar 20:00', '3 Mar 13:00', '4 Mar 06:00',
  '4 Mar 22:00', '7 Mar 15:00', '8 Mar 08:00', '9 Mar 01:00', '9 Mar 17:00', '10 Mar 10:00',
];
const TABS: [string, number][] = [
  ['GBPJPY,M15', 93], ['SPX500,H1', 79], ['SPX500,M15', 87], ['CHFJPY,M15', 87], ['SPX500,H1', 79], ['SPX500,H1', 79],
];

const ChartWindow = () => (
  <ChartColumn>
    <ChartArea>
      <Pane $h={281}>
        <PlotBox>
          <PricePlot />
          <Legend>
            <svg width="7" height="4" viewBox="0 0 7 4"><path d="M0 0h7L3.500 4z" fill={brown} /></svg>
            {'SPX500,H1  4116.11 4116.49 4114.23 4116.36'}
          </Legend>
        </PlotBox>
        <Scale $rows="repeat(8, 1fr)" $top={7}>
          {PRICES.map((p) => <Tick key={p}>{p}</Tick>)}
          <PriceTag>4116.36</PriceTag>
        </Scale>
      </Pane>
      <Pane $h={140}>
        <PlotBox>
          <WindPlot />
          <Legend>Solar wind joy :) -4.5455 -4.5455 -4.5455</Legend>
        </PlotBox>
        <Scale $rows="62fr 62fr" $top={2}><Tick>11</Tick><Tick>0.00</Tick><Tick>-11</Tick></Scale>
      </Pane>
      <Pane $h={139}>
        <PlotBox>
          <OscPlot />
          <Legend $big>MEGAFXPROFIT © www.megafxprofit.com</Legend>
        </PlotBox>
        <Scale $rows="57fr 67fr" $top={2}><Tick>2.3</Tick><Tick>0.00</Tick><Tick>-2.66</Tick></Scale>
      </Pane>
      <TimeAxis>
        {TIMES.map((t, i) => <TimeMark key={t} $grow={i === TIMES.length - 1 ? 25 : 64}>{t}</TimeMark>)}
      </TimeAxis>
    </ChartArea>
    <ChartTabs>
      {TABS.map(([t, w], i) => (
        <React.Fragment key={i}>
          <ChartTab $w={w}>{t}</ChartTab>
          {i < TABS.length - 1 && <TabBar />}
        </React.Fragment>
      ))}
      <ChartTab $w={80} $on>SPX500,H1</ChartTab>
      <TabNav>
        <button aria-label="Previous tab"><svg width="5" height="8" viewBox="0 0 5 8"><path d="M4 0v8L0 4z" fill="#888" /></svg></button>
        <button aria-label="Next tab"><svg width="5" height="8" viewBox="0 0 5 8"><path d="M1 0v8l4-4z" fill="#888" /></svg></button>
      </TabNav>
    </ChartTabs>
  </ChartColumn>
);

/* ---------- status bar ---------- */

const StatusBar = styled.footer`
  display: flex;
  align-items: center;
  height: 23px;
  padding-left: 2px;
  border-top: 1px solid #fff;
`;

const Status = styled.span<{ $w?: number }>`
  display: flex;
  align-items: center;
  gap: 4px;
  flex: ${(p) => (p.$w ? `0 0 ${p.$w}px` : '1')};
  height: 18px;
  white-space: nowrap;
  & + & { padding-left: 5px; border-left: 1px solid ${line}; }
`;

const STATUS: [string, number][] = [
  ['Default', 116], ['2022.03.01 20:00', 102], ['O: 4319.29', 71], ['H: 4326.16', 71],
  ['L: 4288.29', 68], ['C: 4297.53', 70], ['V: 2588', 66],
];

const Traffic = () => (
  <svg width="24" height="14" viewBox="0 0 24 14" shapeRendering="crispEdges" aria-hidden="true">
    {Array.from({ length: 8 }, (_, i) => {
      const h = 3 + i;
      return (
        <g key={i}>
          <rect x={3 * i} y="0" width="2" height={13 - h} fill="#5c7a12" />
          <rect x={3 * i} y={14 - h} width="2" height={h} fill="#a01c0c" />
        </g>
      );
    })}
  </svg>
);

export default function App() {
  return (
    <Window>
      <Global />
      <TitleBar>
        <Logo width="16" height="16" viewBox="0 0 16 16" aria-hidden="true">
          <path d="M3 3.500c3-2.500 10-2 10 1 0 2.500-3 3.500-5 5 2-.5 4 0 6 1-1 3-4 3.500-6 2.500s-4-.5-5.500 0c0-3 2-4.500 5-6.500.8-.7 0-1.700-1.500-1.300C4.800 5.500 3.500 5 3 3.500z" fill="#0e72bd" />
        </Logo>
        <Title>2104660946: HugosWay-Demo3 - Demo Account - Hugo's Way Ltd. - [SPX500,H1]</Title>
        <Caption>
          <CaptionButton aria-label="Minimize"><svg width="10" height="10" viewBox="0 0 10 10"><path d="M1 8h8" stroke="#111" strokeWidth="2" /></svg></CaptionButton>
          <CaptionButton aria-label="Restore"><svg width="10" height="10" viewBox="0 0 10 10"><path d="M.5 2.500h7v7h-7zM2.500.5h7v7" fill="none" stroke="#111" strokeWidth="1.400" /></svg></CaptionButton>
          <CaptionButton $close aria-label="Close"><svg width="9" height="9" viewBox="0 0 9 9"><path d="M1 1l7 7M8 1L1 8" stroke="#fff" strokeWidth="1.800" /></svg></CaptionButton>
        </Caption>
      </TitleBar>
      <MenuBar>
        <svg width="15" height="14" viewBox="0 0 15 14" fill="none" aria-hidden="true">
          <rect x=".5" y=".5" width="10" height="8" fill="#f4f9ff" stroke="#6aa0dc" />
          <rect x="3.500" y="4.500" width="10" height="9" fill="#fff" stroke="#6aa0dc" />
          <path d="M3.500 6.500h10M1 2.500h9" stroke="#6aa0dc" />
          <path d="M5 11l2-2 2 3 1.500-3 1.500 2" stroke="#4a86c8" />
        </svg>
        {MENU.map((m) => <MenuItem key={m}>{m}</MenuItem>)}
        <Mdi>
          <MdiButton aria-label="Minimize chart"><svg width="8" height="8" viewBox="0 0 8 8"><path d="M1 6.500h6" stroke="#6b7f90" strokeWidth="2" /></svg></MdiButton>
          <MdiButton aria-label="Restore chart"><svg width="9" height="8" viewBox="0 0 9 8"><path d="M.5 3.500h5v4h-5zM2.500 3V.5h6v4H6" fill="none" stroke="#6b7f90" strokeWidth="1.300" /></svg></MdiButton>
          <MdiButton aria-label="Close chart"><svg width="8" height="8" viewBox="0 0 8 8"><path d="M1 1l6 6M7 1L1 7" stroke="#6b7f90" strokeWidth="2" /></svg></MdiButton>
        </Mdi>
      </MenuBar>
      <Toolbars />
      <Workspace>
        <MarketWatch />
        <ChartWindow />
      </Workspace>
      <StatusBar>
        <Status>For Help, press F1</Status>
        {STATUS.map(([t, w]) => <Status key={t} $w={w}>{t}</Status>)}
        <Status $w={130}><Traffic />4910/4 kb</Status>
      </StatusBar>
    </Window>
  );
}
